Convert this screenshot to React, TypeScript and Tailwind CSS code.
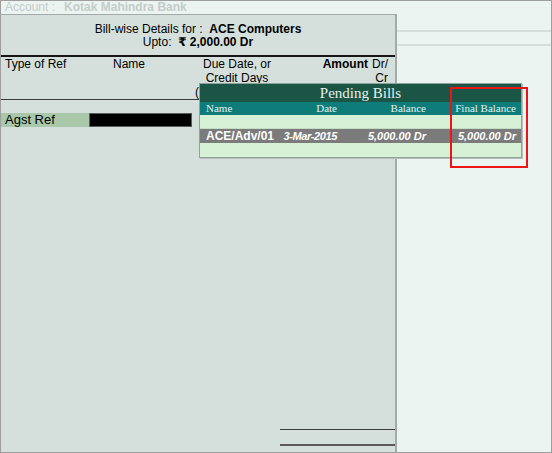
export default function App() {
  const sans = { fontFamily: '"Liberation Sans", "DejaVu Sans", Arial, sans-serif' }
  return (
    <div
      className="relative h-[453px] w-[552px] overflow-hidden border border-[#9e9e9e] bg-[#ecf4f2] text-black"
      style={sans}
    >
      {/* faded header strip */}
      <div className="flex h-[13px] items-center gap-[9px] pl-[4px] text-[12px] leading-[13px] text-[#c3ccc8]">
        <span>Account :</span>
        <span className="font-bold">Kotak Mahindra Bank</span>
      </div>

      <div className="flex h-[438px]">
        {/* bill-wise details panel */}
        <div className="flex w-[396px] flex-col border-r-2 border-t border-[#a3aaa7] bg-[#d5e0dd]">
          <div className="flex h-[40px] flex-col items-center pt-[8px] text-[12px] leading-[13px]">
            <div>
              Bill-wise Details for :&nbsp; <span className="font-bold">ACE Computers</span>
            </div>
            <div>
              Upto:&nbsp; <span className="font-bold">₹ 2,000.00 Dr</span>
            </div>
          </div>
          <div className="h-[2px] bg-[#161616]" />

          <div className="flex h-[42px] text-[12px] leading-[14px]">
            <div className="w-[88px] pl-[4px]">Type of Ref</div>
            <div className="w-[104px] pl-[24px]">Name</div>
            <div className="flex w-[88px] flex-col items-center">
              <span>Due Date, or</span>
              <span>Credit Days</span>
              <span className="self-start pl-[2px]">(</span>
            </div>
            <div className="w-[87px] text-right font-bold">Amount</div>
            <div className="flex w-[20px] flex-col items-end">
              <span>Dr/</span>
              <span>Cr</span>
            </div>
          </div>
          <div className="h-px bg-[#3a3a3a]" />

          <div className="mt-[13px] flex h-[14px] text-[13px] leading-[14px]">
            <div className="w-[88px] bg-[#a9c8a9] pl-[4px]">Agst Ref</div>
            <div className="w-[103px] border border-[#5c5c5c] bg-black" />
          </div>

          <div className="flex-1" />
          <div className="ml-[279px] h-px bg-[#3d3d3d]" />
          <div className="ml-[279px] mt-[14px] h-[2px] bg-[#5a5a5a]" />
          <div className="h-[6px]" />
        </div>

        {/* right side */}
        <div className="flex-1">
          <div className="mt-[16px] h-[2px] bg-[#d7dddb]" />
          <div className="mt-[12px] h-[2px] bg-[#d7dddb]" />
        </div>
      </div>

      {/* Pending Bills popup */}
      <div className="absolute left-[198px] top-[82px] w-[323px] border border-[#8fa29b] bg-[#d6f1d6] shadow-[1px_1px_0_#b6bfbc]">
        <div
          className="h-[18px] bg-[#1a5546] text-center text-[15px] leading-[18px] text-[#e6f0ea]"
          style={{ fontFamily: '"Liberation Serif", "DejaVu Serif", serif' }}
        >
          Pending Bills
        </div>
        <div
          className="flex h-[13px] bg-[#0e7d79] pl-[6px] text-[11px] leading-[13px] text-[#e3f1ef]"
          style={{ fontFamily: '"Liberation Serif", "DejaVu Serif", serif' }}
        >
          <div className="w-[70px]">Name</div>
          <div className="w-[61px] text-right">Date</div>
          <div className="w-[89px] text-right">Balance</div>
          <div className="w-[90px] text-right">Final Balance</div>
        </div>
        <div className="h-[14px] border-b border-[#c4dcc4]" />
        <div className="flex h-[14px] bg-[#7b7b7b] pl-[6px] text-[12px] font-bold leading-[14px] text-white">
          <div className="w-[70px]">ACE/Adv/01</div>
          <div className="w-[61px] text-right text-[11px] italic tracking-[-0.4px]">3-Mar-2015</div>
          <div className="w-[89px] text-right text-[11px] italic">5,000.00 Dr</div>
          <div className="w-[90px] text-right text-[11px] italic">5,000.00 Dr</div>
        </div>
        <div className="h-[14px]" />
      </div>

      {/* annotation box */}
      <div className="absolute left-[449px] top-[86px] h-[81px] w-[78px] border-2 border-[#ec1515]" />
    </div>
  )
}
